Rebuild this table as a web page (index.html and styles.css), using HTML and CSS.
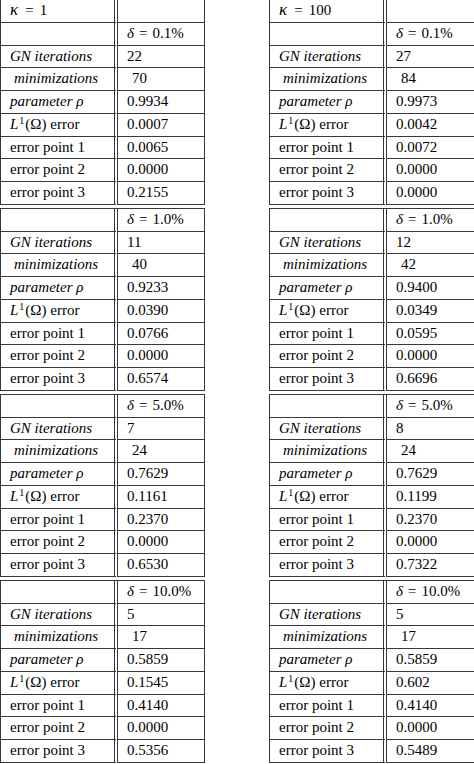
FILE: index.html
```html
<!DOCTYPE html>
<html lang="en">
<head>
<meta charset="utf-8">
<title>Results table</title>
<link rel="stylesheet" href="styles.css">
</head>
<body>
<div class="page">
  <div class="col">
    <div class="block">
      <div class="cell label"><i class="kappa">κ</i><span class="eq k">=</span>1</div><div class="cell"></div>
      <div class="cell label"></div><div class="cell"><i>δ</i><span class="eq">=</span>0.1%</div>
      <div class="cell label it">GN iterations</div><div class="cell">22</div>
      <div class="cell label it ind">minimizations</div><div class="cell ind2">70</div>
      <div class="cell label it">parameter ρ</div><div class="cell">0.9934</div>
      <div class="cell label"><i>L</i><sup class="sup">1</sup>(Ω) error</div><div class="cell">0.0007</div>
      <div class="cell label">error point 1</div><div class="cell">0.0065</div>
      <div class="cell label">error point 2</div><div class="cell">0.0000</div>
      <div class="cell label">error point 3</div><div class="cell">0.2155</div>
    </div>
    <div class="block">
      <div class="cell label"></div><div class="cell"><i>δ</i><span class="eq">=</span>1.0%</div>
      <div class="cell label it">GN iterations</div><div class="cell">11</div>
      <div class="cell label it ind">minimizations</div><div class="cell ind2">40</div>
      <div class="cell label it">parameter ρ</div><div class="cell">0.9233</div>
      <div class="cell label"><i>L</i><sup class="sup">1</sup>(Ω) error</div><div class="cell">0.0390</div>
      <div class="cell label">error point 1</div><div class="cell">0.0766</div>
      <div class="cell label">error point 2</div><div class="cell">0.0000</div>
      <div class="cell label">error point 3</div><div class="cell">0.6574</div>
    </div>
    <div class="block">
      <div class="cell label"></div><div class="cell"><i>δ</i><span class="eq">=</span>5.0%</div>
      <div class="cell label it">GN iterations</div><div class="cell">7</div>
      <div class="cell label it ind">minimizations</div><div class="cell ind2">24</div>
      <div class="cell label it">parameter ρ</div><div class="cell">0.7629</div>
      <div class="cell label"><i>L</i><sup class="sup">1</sup>(Ω) error</div><div class="cell">0.1161</div>
      <div class="cell label">error point 1</div><div class="cell">0.2370</div>
      <div class="cell label">error point 2</div><div class="cell">0.0000</div>
      <div class="cell label">error point 3</div><div class="cell">0.6530</div>
    </div>
    <div class="block">
      <div class="cell label"></div><div class="cell"><i>δ</i><span class="eq">=</span>10.0%</div>
      <div class="cell label it">GN iterations</div><div class="cell">5</div>
      <div class="cell label it ind">minimizations</div><div class="cell ind2">17</div>
      <div class="cell label it">parameter ρ</div><div class="cell">0.5859</div>
      <div class="cell label"><i>L</i><sup class="sup">1</sup>(Ω) error</div><div class="cell">0.1545</div>
      <div class="cell label">error point 1</div><div class="cell">0.4140</div>
      <div class="cell label">error point 2</div><div class="cell">0.0000</div>
      <div class="cell label">error point 3</div><div class="cell">0.5356</div>
    </div>
  </div>
  <div class="col wide">
    <div class="block">
      <div class="cell label"><i class="kappa">κ</i><span class="eq k">=</span>100</div><div class="cell"></div>
      <div class="cell label"></div><div class="cell"><i>δ</i><span class="eq">=</span>0.1%</div>
      <div class="cell label it">GN iterations</div><div class="cell">27</div>
      <div class="cell label it ind">minimizations</div><div class="cell ind2">84</div>
      <div class="cell label it">parameter ρ</div><div class="cell">0.9973</div>
      <div class="cell label"><i>L</i><sup class="sup">1</sup>(Ω) error</div><div class="cell">0.0042</div>
      <div class="cell label">error point 1</div><div class="cell">0.0072</div>
      <div class="cell label">error point 2</div><div class="cell">0.0000</div>
      <div class="cell label">error point 3</div><div class="cell">0.0000</div>
    </div>
    <div class="block">
      <div class="cell label"></div><div class="cell"><i>δ</i><span class="eq">=</span>1.0%</div>
      <div class="cell label it">GN iterations</div><div class="cell">12</div>
      <div class="cell label it ind">minimizations</div><div class="cell ind2">42</div>
      <div class="cell label it">parameter ρ</div><div class="cell">0.9400</div>
      <div class="cell label"><i>L</i><sup class="sup">1</sup>(Ω) error</div><div class="cell">0.0349</div>
      <div class="cell label">error point 1</div><div class="cell">0.0595</div>
      <div class="cell label">error point 2</div><div class="cell">0.0000</div>
      <div class="cell label">error point 3</div><div class="cell">0.6696</div>
    </div>
    <div class="block">
      <div class="cell label"></div><div class="cell"><i>δ</i><span class="eq">=</span>5.0%</div>
      <div class="cell label it">GN iterations</div><div class="cell">8</div>
      <div class="cell label it ind">minimizations</div><div class="cell ind2">24</div>
      <div class="cell label it">parameter ρ</div><div class="cell">0.7629</div>
      <div class="cell label"><i>L</i><sup class="sup">1</sup>(Ω) error</div><div class="cell">0.1199</div>
      <div class="cell label">error point 1</div><div class="cell">0.2370</div>
      <div class="cell label">error point 2</div><div class="cell">0.0000</div>
      <div class="cell label">error point 3</div><div class="cell">0.7322</div>
    </div>
    <div class="block">
      <div class="cell label"></div><div class="cell"><i>δ</i><span class="eq">=</span>10.0%</div>
      <div class="cell label it">GN iterations</div><div class="cell">5</div>
      <div class="cell label it ind">minimizations</div><div class="cell ind2">17</div>
      <div class="cell label it">parameter ρ</div><div class="cell">0.5859</div>
      <div class="cell label"><i>L</i><sup class="sup">1</sup>(Ω) error</div><div class="cell">0.602</div>
      <div class="cell label">error point 1</div><div class="cell">0.4140</div>
      <div class="cell label">error point 2</div><div class="cell">0.0000</div>
      <div class="cell label">error point 3</div><div class="cell">0.5489</div>
    </div>
  </div>
</div>
</body>
</html>
```

FILE: styles.css
```css
html, body {
  margin: 0;
  padding: 0;
  background: #ffffff;
}

body {
  font-family: "Liberation Serif", "Times New Roman", serif;
  font-size: 15px;
  color: #000000;
  overflow: hidden;
}

.page {
  display: flex;
  gap: 64px;
  margin-top: -1px;
}

.col {
  display: flex;
  flex-direction: column;
  gap: 3px;
  width: 205px;
  flex: none;
}

.col.wide {
  width: 207px;
}

.block {
  display: grid;
  grid-template-columns: 117px 87px;
  grid-auto-rows: 22.76px;
  border-top: 1px solid #383838;
  border-left: 1px solid #383838;
}

.col.wide .block {
  grid-template-columns: 117px 89px;
}

.cell {
  box-sizing: border-box;
  border-bottom: 1px solid #383838;
  border-right: 1px solid #383838;
  padding-left: 9px;
  line-height: 21.76px;
  white-space: nowrap;
  overflow: hidden;
}

.label {
  border-right: 4px double #383838;
}

.it {
  font-style: italic;
}

.ind {
  padding-left: 13px;
}

.ind2 {
  padding-left: 14px;
}

.eq {
  margin: 0 5px;
}

.kappa {
  font-size: 17px;
  line-height: 0;
}

.eq.k {
  margin: 0 6px 0 7px;
}

.sup {
  font-size: 10px;
  line-height: 0;
  vertical-align: 5px;
  margin-left: 1px;
  margin-right: 1px;
}
```
